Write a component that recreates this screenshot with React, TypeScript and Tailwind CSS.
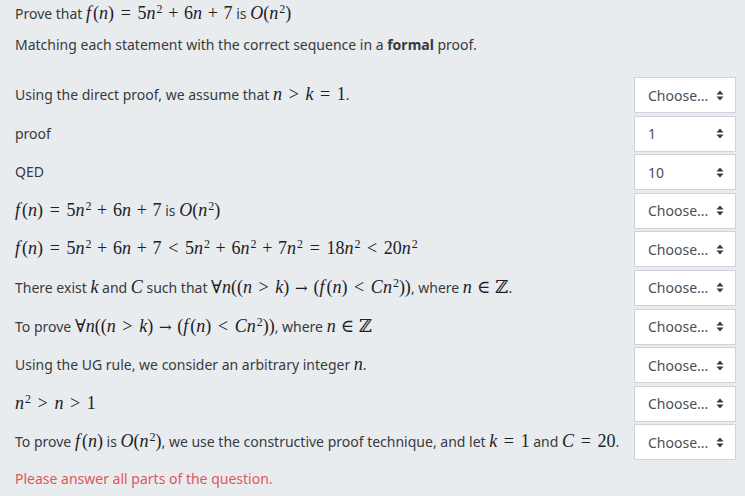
import React from "react";

// math helpers (KaTeX-ish look with serif fallback)
const M = ({ children }: { children: React.ReactNode }) => (
  <span className="font-['Liberation_Serif','DejaVu_Serif',serif] text-[18px] leading-[1] text-[#1d2125] whitespace-nowrap">
    {children}
  </span>
);
const V = ({ children }: { children: React.ReactNode }) => <i className="italic">{children}</i>;
// relation: thick space each side
const R = ({ children }: { children: React.ReactNode }) => (
  <span className="mx-[0.26em] inline-block w-[0.78em] text-center">{children}</span>
);
// binary operator: medium space
const B = ({ children }: { children: React.ReactNode }) => (
  <span className="mx-[0.21em] inline-block w-[0.78em] text-center">{children}</span>
);
const Arrow = () => (
  <span className="mx-[0.28em] inline-block w-[1.05em] text-center font-['DejaVu_Serif',serif] text-[15px]">→</span>
);
const Sq = () => <sup className="ml-[1px] text-[12px]">2</sup>;
const F = () => <i className="mr-[2px] italic">f</i>;

const fn = (
  <>
    <F />(<V>n</V>)
  </>
);
const On2 = (
  <M>
    <V>O</V>(<V>n</V>
    <Sq />)
  </M>
);
const forall = (
  <M>
    ∀<V>n</V>((<V>n</V>
    <R>&gt;</R>
    <V>k</V>)<Arrow />(<F />(<V>n</V>)<R>&lt;</R>
    <V>C</V>
    <V>n</V>
    <Sq />
    ))
  </M>
);

type Row = { text: React.ReactNode; value: string };

const rows: Row[] = [
  {
    text: (
      <>
        Using the direct proof, we assume that{" "}
        <M>
          <V>n</V>
          <R>&gt;</R>
          <V>k</V>
          <R>=</R>1
        </M>
        .
      </>
    ),
    value: "Choose...",
  },
  { text: "proof", value: "1" },
  { text: "QED", value: "10" },
  {
    text: (
      <>
        <M>
          {fn}
          <R>=</R>5<V>n</V>
          <Sq />
          <B>+</B>6<V>n</V>
          <B>+</B>7
        </M>{" "}
        is {On2}
      </>
    ),
    value: "Choose...",
  },
  {
    text: (
      <M>
        {fn}
        <R>=</R>5<V>n</V>
        <Sq />
        <B>+</B>6<V>n</V>
        <B>+</B>7<R>&lt;</R>5<V>n</V>
        <Sq />
        <B>+</B>6<V>n</V>
        <Sq />
        <B>+</B>7<V>n</V>
        <Sq />
        <R>=</R>18<V>n</V>
        <Sq />
        <R>&lt;</R>20<V>n</V>
        <Sq />
      </M>
    ),
    value: "Choose...",
  },
  {
    text: (
      <>
        There exist{" "}
        <M>
          <V>k</V>
        </M>{" "}
        and{" "}
        <M>
          <V>C</V>
        </M>{" "}
        such that {forall}, where{" "}
        <M>
          <V>n</V>
          <R>∈</R>ℤ
        </M>
        .
      </>
    ),
    value: "Choose...",
  },
  {
    text: (
      <>
        To prove {forall}, where{" "}
        <M>
          <V>n</V>
          <R>∈</R>ℤ
        </M>
      </>
    ),
    value: "Choose...",
  },
  {
    text: (
      <>
        Using the UG rule, we consider an arbitrary integer{" "}
        <M>
          <V>n</V>
        </M>
        .
      </>
    ),
    value: "Choose...",
  },
  {
    text: (
      <M>
        <V>n</V>
        <Sq />
        <R>&gt;</R>
        <V>n</V>
        <R>&gt;</R>1
      </M>
    ),
    value: "Choose...",
  },
  {
    text: (
      <>
        To prove <M>{fn}</M> is {On2}, we use the constructive proof technique, and let{" "}
        <M>
          <V>k</V>
          <R>=</R>1
        </M>{" "}
        and{" "}
        <M>
          <V>C</V>
          <R>=</R>20
        </M>
        .
      </>
    ),
    value: "Choose...",
  },
];

const SelectBox = ({ value }: { value: string }) => (
  <div className="flex h-[36px] w-[102px] shrink-0 items-center justify-between border border-[#ced4da] bg-white pl-[13px] pr-[11px] text-[14px] text-[#495057]">
    <span>{value}</span>
    <svg width="8" height="11" viewBox="0 0 8 11" className="text-[#343a40]">
      <path d="M4 0.5 L7.5 4.5 H0.5 Z" fill="currentColor" />
      <path d="M4 10.5 L7.5 6.5 H0.5 Z" fill="currentColor" />
    </svg>
  </div>
);

export default function App() {
  return (
    <div className="h-[496px] w-[745px] overflow-hidden bg-[#e9ecef] pl-[15px] pr-[9px] pt-[3px] font-['Noto_Sans','Open_Sans',sans-serif] text-[14px] text-[#373a3c]">
      <p className="leading-[22px]">
        Prove that{" "}
        <M>
          {fn}
          <R>=</R>5<V>n</V>
          <Sq />
          <B>+</B>6<V>n</V>
          <B>+</B>7
        </M>{" "}
        is {On2}
      </p>
      <p className="mt-[9px] leading-[22px]">
        Matching each statement with the correct sequence in a <b className="font-bold">formal</b> proof.
      </p>

      <div className="mt-[21px] flex flex-col gap-[2.6px]">
        {rows.map((r, i) => (
          <div key={i} className="flex items-start justify-between gap-[6px]">
            <div className="pt-[7px] leading-[22px] whitespace-nowrap">{r.text}</div>
            <SelectBox value={r.value} />
          </div>
        ))}
      </div>

      <p className="mt-[8px] leading-[22px] text-[#e0565b]">Please answer all parts of the question.</p>
    </div>
  );
}
